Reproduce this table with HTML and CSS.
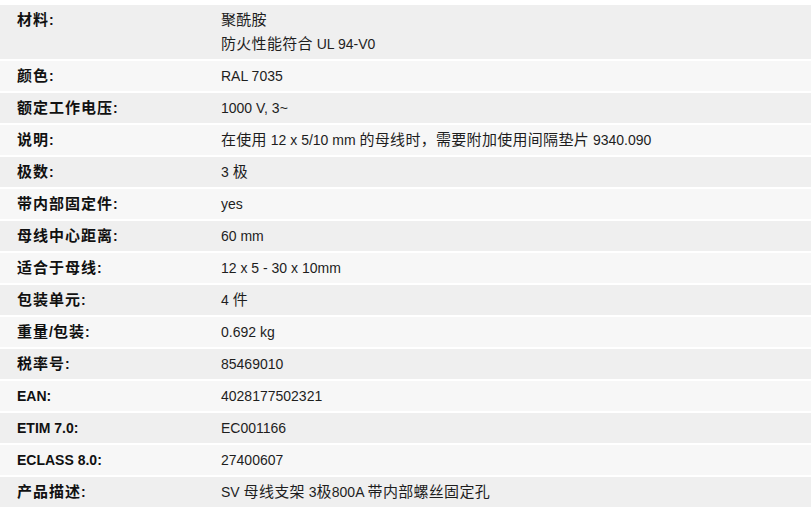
FILE: index.html
```html
<!DOCTYPE html>
<html lang="zh">
<head>
<meta charset="utf-8">
<link rel="stylesheet" href="styles.css">
</head>
<body>
<table class="specs">
  <tr class="odd"><th><span class="cjk">材料</span>:</th><td><span class="cjk">聚酰胺</span><br><span class="cjk">防火性能符合</span> UL 94-V0</td></tr>
  <tr class="even"><th><span class="cjk">颜色</span>:</th><td>RAL 7035</td></tr>
  <tr class="odd"><th><span class="cjk">额定工作电压</span>:</th><td>1000 V, 3~</td></tr>
  <tr class="even"><th><span class="cjk">说明</span>:</th><td><span class="cjk">在使用</span> 12 x 5/10 mm <span class="cjk">的母线时，需要附加使用间隔垫片</span> 9340.090</td></tr>
  <tr class="odd"><th><span class="cjk">极数</span>:</th><td>3 <span class="cjk">极</span></td></tr>
  <tr class="even"><th><span class="cjk">带内部固定件</span>:</th><td>yes</td></tr>
  <tr class="odd"><th><span class="cjk">母线中心距离</span>:</th><td>60 mm</td></tr>
  <tr class="even"><th><span class="cjk">适合于母线</span>:</th><td>12 x 5 - 30 x 10mm</td></tr>
  <tr class="odd"><th><span class="cjk">包装单元</span>:</th><td>4 <span class="cjk">件</span></td></tr>
  <tr class="even"><th><span class="cjk">重量</span>/<span class="cjk">包装</span>:</th><td>0.692 kg</td></tr>
  <tr class="odd"><th><span class="cjk">税率号</span>:</th><td>85469010</td></tr>
  <tr class="even"><th>EAN:</th><td>4028177502321</td></tr>
  <tr class="odd"><th>ETIM 7.0:</th><td>EC001166</td></tr>
  <tr class="even"><th>ECLASS 8.0:</th><td>27400607</td></tr>
  <tr class="odd"><th><span class="cjk">产品描述</span>:</th><td>SV <span class="cjk">母线支架</span> 3<span class="cjk">极</span>800A <span class="cjk">带内部螺丝固定孔</span></td></tr>
</table>
</body>
</html>
```
FILE: styles.css
```css
html, body {
  margin: 0;
  padding: 0;
  background: #fff;
}
body {
  font-family: "Liberation Sans", Arial, "Noto Sans CJK SC", sans-serif;
  font-size: 14px;
  color: #1e1e1e;
}
.specs {
  width: 100%;
  margin-top: 3px;
  border-collapse: separate;
  border-spacing: 0 2px;
}
.specs th,
.specs td {
  padding: 3px 0 3px 17px;
  line-height: 24px;
  vertical-align: top;
  text-align: left;
}
.specs th {
  width: 187px;
  font-weight: bold;
  color: #111;
}
.specs .cjk {
  font-family: "Noto Sans CJK SC", sans-serif;
  font-size: 15px;
  line-height: 1;
  letter-spacing: 0.3px;
}
.specs th .cjk {
  letter-spacing: 1px;
}
.specs .odd th, .specs .odd td { background: #efefef; }
.specs .even th, .specs .even td { background: #f7f7f7; }
```
